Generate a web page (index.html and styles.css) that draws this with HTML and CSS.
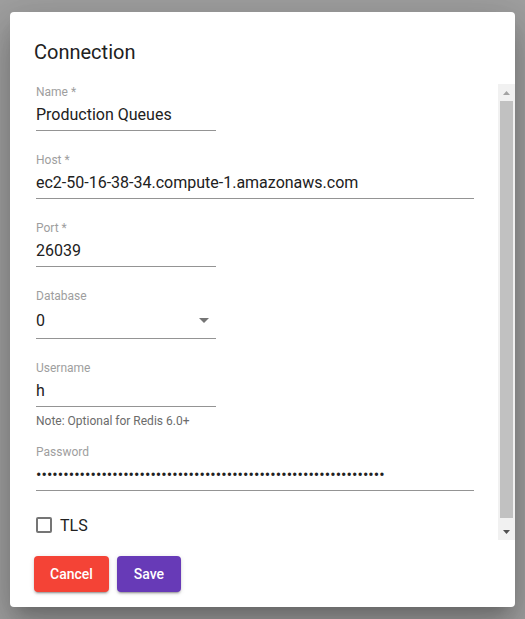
FILE: index.html
```html
<!DOCTYPE html>
<html lang="en">

<head>
    <meta charset="UTF-8">
    <meta name="viewport" content="width=device-width, initial-scale=1.0">
    <title>Connection</title>
    <link rel="stylesheet" href="styles.css">
</head>

<body>

    <div class="dialog">
        <h2 class="dialog-title">Connection</h2>

        <div class="dialog-body">
            <div class="dialog-content">
                <div class="field short">
                    <label>Name *</label>
                    <div class="input">Production Queues</div>
                </div>

                <div class="field">
                    <label>Host *</label>
                    <div class="input">ec2-50-16-38-34.compute-1.amazonaws.com</div>
                </div>

                <div class="field short">
                    <label>Port *</label>
                    <div class="input">26039</div>
                </div>

                <div class="field short">
                    <label>Database</label>
                    <div class="input select">
                        <span>0</span>
                        <svg width="10" height="5" viewBox="0 0 10 5">
                            <path d="M0 0l5 5 5-5z" fill="#757575" />
                        </svg>
                    </div>
                </div>

                <div class="field short">
                    <label>Username</label>
                    <div class="input">h</div>
                    <p class="helper">Note: Optional for Redis 6.0+</p>
                </div>

                <div class="field">
                    <label>Password</label>
                    <div class="input password">••••••••••••••••••••••••••••••••••••••••••••••••••••••••••••••••</div>
                </div>

                <div class="checkbox-row">
                    <span class="checkbox"></span>
                    <span>TLS</span>
                </div>
            </div>

            <!-- scrollbar, drawn by hand -->
            <div class="scrollbar">
                <div class="scroll-btn">
                    <svg width="7" height="4" viewBox="0 0 7 4">
                        <path d="M0 4l3.5-4 3.5 4z" fill="#a3a3a3" />
                    </svg>
                </div>
                <div class="scroll-track">
                    <div class="scroll-thumb"></div>
                </div>
                <div class="scroll-btn">
                    <svg width="7" height="4" viewBox="0 0 7 4">
                        <path d="M0 0l3.5 4 3.5-4z" fill="#505050" />
                    </svg>
                </div>
            </div>
        </div>

        <div class="dialog-actions">
            <button class="btn btn-cancel">Cancel</button>
            <button class="btn btn-save">Save</button>
        </div>
    </div>

</body>

</html>
```

FILE: styles.css
```css
* {
    margin: 0;
    padding: 0;
    box-sizing: border-box;
}

body {
    min-height: 100vh;
    background: #a0a0a0;
    font-family: Roboto, "Liberation Sans", sans-serif;
    color: #212121;
    padding: 12px 10px;
}

/* DIALOG */
.dialog {
    width: 505px;
    background: #fff;
    border-radius: 4px;
    box-shadow: 0 11px 15px -7px rgba(0, 0, 0, .2),
        0 24px 38px 3px rgba(0, 0, 0, .14),
        0 9px 46px 8px rgba(0, 0, 0, .12);
}

.dialog-title {
    font-size: 20px;
    font-weight: 400;
    line-height: 32px;
    padding: 24px 24px 16px;
}

.dialog-body {
    display: flex;
    height: 456px;
}

.dialog-content {
    flex: 1;
    overflow: hidden;
    padding: 0 24px 0 26px;
}

.dialog-actions {
    display: flex;
    gap: 8px;
    padding: 16px 24px 15px;
}

/* SCROLLBAR */
.scrollbar {
    width: 17px;
    display: flex;
    flex-direction: column;
    background: #f1f1f1;
}

.scroll-btn {
    height: 17px;
    display: flex;
    align-items: center;
    justify-content: center;
}

.scroll-track {
    flex: 1;
    padding: 0 2px 5px;
}

.scroll-thumb {
    height: 100%;
    background: #c1c1c1;
}

/* FIELDS */
.field {
    margin-bottom: 21px;
}

.field.short {
    width: 180px;
}

.field label {
    display: block;
    font-size: 12px;
    line-height: 16px;
    color: #9e9e9e;
}

.input {
    margin-top: 5px;
    font-size: 16px;
    line-height: 19px;
    padding-bottom: 6px;
    border-bottom: 1px solid #949494;
    white-space: nowrap;
}

.input.select {
    display: flex;
    align-items: center;
    justify-content: space-between;
    padding-top: 2px;
    padding-bottom: 8px;
}

.input.select svg {
    margin-right: 7px;
}

.field .helper {
    margin-top: 6px;
    margin-bottom: -6px;
    font-size: 12px;
    line-height: 16px;
    color: #6b6b6b;
}

.input.password {
    overflow: hidden;
    letter-spacing: .05px;
}

/* CHECKBOX */
.checkbox-row {
    display: flex;
    align-items: center;
    gap: 8px;
    height: 42px;
    margin-top: -8px;
    font-size: 16px;
}

.checkbox {
    width: 16px;
    height: 16px;
    border: 2px solid #757575;
    border-radius: 2px;
}

/* BUTTONS */
.btn {
    height: 36px;
    min-width: 64px;
    padding: 0 16px;
    border: 0;
    border-radius: 4px;
    color: #fff;
    font-family: Roboto, "Liberation Sans", sans-serif;
    font-size: 14px;
    font-weight: 500;
    box-shadow: 0 3px 1px -2px rgba(0, 0, 0, .2),
        0 2px 2px 0 rgba(0, 0, 0, .14),
        0 1px 5px 0 rgba(0, 0, 0, .12);
}

.btn-cancel {
    background: #f44336;
}

.btn-save {
    background: #673ab7;
}
```
